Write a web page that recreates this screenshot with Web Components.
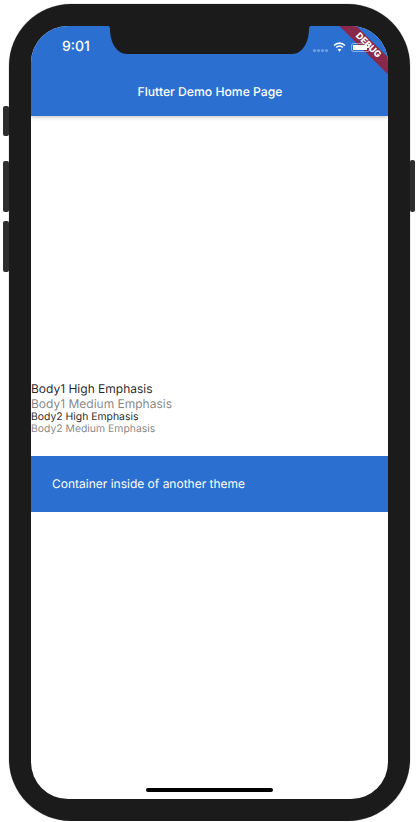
<!DOCTYPE html>
<html lang="en"><head><meta charset="utf-8"><title>Flutter Demo</title>
<style>html,body{margin:0;padding:0;background:#fff;font-family:Inter,"Noto Sans",sans-serif;text-rendering:geometricPrecision}</style></head>
<body>
<phone-frame>
  <app-header slot="top" title-text="Flutter Demo Home Page"></app-header>
  <type-stack>
    <type-line kind="body1" tone="high">Body1 High Emphasis</type-line>
    <type-line kind="body1" tone="medium">Body1 Medium Emphasis</type-line>
    <type-line kind="body2" tone="high">Body2 High Emphasis</type-line>
    <type-line kind="body2" tone="medium">Body2 Medium Emphasis</type-line>
  </type-stack>
  <theme-panel>Container inside of another theme</theme-panel>
</phone-frame>
<script>
function def(name, html, init){
  customElements.define(name, class extends HTMLElement{
    connectedCallback(){
      if(this.shadowRoot) return;
      this.attachShadow({mode:'open'}).innerHTML = html;
      if(init) init(this);
    }
  });
}
def('phone-frame', `<style>
:host{display:block;position:relative;width:401px;height:817px;margin:4px 0 0 9px;box-sizing:border-box;padding:22px;background:#1b1b1b;border-radius:62px;box-shadow:0 0 0 .5px #d8d8d8}
.screen{position:relative;height:773px;background:#fff;border-radius:37px;overflow:hidden;display:flex;flex-direction:column}
.btn{position:absolute;background:#2e2e2e;border-radius:2px;width:6px}
.l{left:-6px}.r{right:-5px;width:5px}
.notch{position:absolute;left:77px;top:0;width:203px;height:28px;display:block}
.home{position:absolute;left:115px;bottom:7px;width:127px;height:4.500px;border-radius:3px;background:#000}
</style>
<div class="btn l" style="top:102px;height:30px"></div>
<div class="btn l" style="top:157px;height:51px"></div>
<div class="btn l" style="top:217px;height:51px"></div>
<div class="btn r" style="top:156px;height:52px"></div>
<div class="screen">
  <slot name="top"></slot>
  <slot></slot>
  <svg class="notch" viewBox="0 0 203 28"><path fill="#1b1b1b" d="M0 0H203C201.500 0 201 1 201 3C201 17 194 28 184 28H19C9 28 2 17 2 3C2 1 1.500 0 0 0Z"/></svg>
  <div class="home"></div>
</div>`);
def('status-bar', `<style>
:host{display:flex;align-items:center;justify-content:space-between;height:44px;box-sizing:border-box;padding:0 18px 0 31px;color:#fff;position:relative;z-index:2}
.t{font:500 14px/1 Inter,sans-serif;position:relative;top:-1.500px;text-rendering:geometricPrecision}
.r{display:flex;align-items:center;position:relative;top:-1px}
.dots{display:flex;gap:1px;margin-top:7px;margin-right:5px}
.dots i{width:3px;height:3px;border-radius:50%;background:#fff;opacity:.35}
.bat{margin-left:5px;width:19px;height:9px;box-sizing:border-box;border:1px solid rgba(255,255,255,.45);border-radius:2.500px;padding:1px}
.bat i{display:block;width:14px;height:100%;background:#fff}
</style>
<span class="t">9:01</span>
<div class="r">
  <span class="dots"><i></i><i></i><i></i><i></i></span>
  <svg width="13" height="10" viewBox="0 0 14 11"><g fill="none" stroke="#fff" stroke-width="1.700"><path d="M1 3.800C4.500 .4 9.500 .4 13 3.800"/><path d="M3.300 6.100C5.500 4 8.500 4 10.700 6.100"/></g><path fill="#fff" d="M7 10.600L4.900 8.300C6.100 7.300 7.900 7.300 9.100 8.300Z"/></svg>
  <span class="bat"><i></i></span>
</div>`);
def('app-header', `<style>
:host{display:block;background:#2b6fd1;color:#fff;height:90px;box-shadow:0 1px 4px rgba(0,0,0,.25);position:relative}
h1{margin:0;height:45px;display:flex;align-items:center;justify-content:center;font:500 12.200px/1 Inter,sans-serif;position:relative;left:.5px;text-rendering:geometricPrecision}
</style><debug-banner></debug-banner><status-bar></status-bar><h1></h1>`, el=>{el.shadowRoot.querySelector('h1').textContent=el.getAttribute('title-text')});
def('debug-banner', `<style>
:host{display:block;position:absolute;top:0;right:0;width:60px;height:60px;overflow:hidden;pointer-events:none}
div{position:absolute;left:-.5px;top:13.500px;width:80px;height:11.500px;background:rgb(137,40,75);color:#fff;transform:rotate(45deg);display:flex;align-items:center;justify-content:center;font:800 9px/1 Inter,sans-serif;text-rendering:geometricPrecision}
</style><div>DEBUG</div>`);
def('type-stack', `<style>:host{display:flex;flex-direction:column;align-items:flex-start;padding-top:266px;color:#000}</style><slot></slot>`);
def('type-line', `<style>
:host{display:block;font-family:Inter,sans-serif;text-rendering:geometricPrecision}
:host([kind=body1]){font-size:12px;line-height:14.500px}
:host([kind=body2]){font-size:10.400px;line-height:12.300px}
:host([tone=high]){color:rgba(0,0,0,.87)}
:host([tone=medium]){color:rgba(0,0,0,.5)}
</style><slot></slot>`);
def('theme-panel', `<style>
:host{display:flex;align-items:center;height:56px;margin-top:20.400px;padding-left:21px;background:#2b6fd1;color:#fff;font:400 12px/1 Inter,sans-serif;text-rendering:geometricPrecision}
</style><slot></slot>`);
</script>
</body></html>
